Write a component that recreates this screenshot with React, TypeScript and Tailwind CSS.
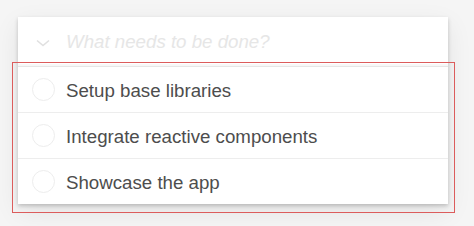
import React from 'react';

const todos = ['Setup base libraries', 'Integrate reactive components', 'Showcase the app'];

export default function App() {
  return (
    <div
      className="relative w-[474px] h-[226px] bg-[#f5f5f5] pt-[17px] pl-[18px] overflow-hidden"
      style={{ fontFamily: '"Liberation Sans", Arial, sans-serif' }}
    >
      <div className="w-[430px] bg-white shadow-[0_2px_4px_rgba(0,0,0,0.2),0_8px_24px_rgba(0,0,0,0.08)]">
        <div className="flex items-center h-[49px] shadow-[inset_0_-2px_1px_rgba(0,0,0,0.03)]">
          <div className="w-[48px] flex justify-center pl-[1px] pt-[3px]">
            <svg width="14" height="8" viewBox="0 0 14 8" fill="none">
              <path d="M1 1.5 L7 6.5 L13 1.5" stroke="#e0e0e0" strokeWidth="1.6" />
            </svg>
          </div>
          <span className="text-[18.7px] italic text-[#e6e6e6] pt-[2px]">What needs to be done?</span>
        </div>
        <ul>
          {todos.map((t, i) => (
            <li
              key={t}
              className={`flex items-center h-[46px] ${i > 0 ? 'border-t border-[#ededed]' : 'border-t border-[#e6e6e6]'}`}
            >
              <div className="w-[48px] flex justify-center pl-[2px]">
                <div className="w-[23px] h-[23px] rounded-full border border-[#ededed]" />
              </div>
              <span className="text-[18.7px] text-[#4d4d4d] pt-[3px]">{t}</span>
            </li>
          ))}
        </ul>
      </div>
      <div className="absolute left-[12px] top-[62px] w-[443px] h-[151px] border border-[#dc5c5c]" />
    </div>
  );
}
